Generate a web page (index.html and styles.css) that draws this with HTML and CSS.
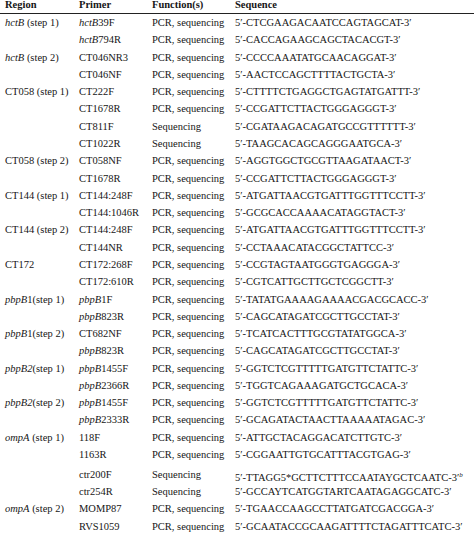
FILE: index.html
```html
<!DOCTYPE html>
<html>
<head>
<meta charset="utf-8">
<link rel="stylesheet" href="styles.css">
</head>
<body>
<table class="primers">
  <colgroup>
    <col class="c-region">
    <col class="c-primer">
    <col class="c-func">
    <col class="c-seq">
  </colgroup>
  <thead>
    <tr><th>Region</th><th>Primer</th><th>Function(s)</th><th>Sequence</th></tr>
  </thead>
  <tbody>
    <tr><td><i>hctB</i> (step 1)</td><td><i>hctB</i>39F</td><td>PCR, sequencing</td><td>5′-CTCGAAGACAATCCAGTAGCAT-3′</td></tr>
    <tr><td></td><td><i>hctB</i>794R</td><td>PCR, sequencing</td><td>5′-CACCAGAAGCAGCTACACGT-3′</td></tr>
    <tr><td><i>hctB</i> (step 2)</td><td>CT046NR3</td><td>PCR, sequencing</td><td>5′-CCCCAAATATGCAACAGGAT-3′</td></tr>
    <tr><td></td><td>CT046NF</td><td>PCR, sequencing</td><td>5′-AACTCCAGCTTTTACTGCTA-3′</td></tr>
    <tr><td>CT058 (step 1)</td><td>CT222F</td><td>PCR, sequencing</td><td>5′-CTTTTCTGAGGCTGAGTATGATTT-3′</td></tr>
    <tr><td></td><td>CT1678R</td><td>PCR, sequencing</td><td>5′-CCGATTCTTACTGGGAGGGT-3′</td></tr>
    <tr><td></td><td>CT811F</td><td>Sequencing</td><td>5′-CGATAAGACAGATGCCGTTTTTT-3′</td></tr>
    <tr><td></td><td>CT1022R</td><td>Sequencing</td><td>5′-TAAGCACAGCAGGGAATGCA-3′</td></tr>
    <tr><td>CT058 (step 2)</td><td>CT058NF</td><td>PCR, sequencing</td><td>5′-AGGTGGCTGCGTTAAGATAACT-3′</td></tr>
    <tr><td></td><td>CT1678R</td><td>PCR, sequencing</td><td>5′-CCGATTCTTACTGGGAGGGT-3′</td></tr>
    <tr><td>CT144 (step 1)</td><td>CT144:248F</td><td>PCR, sequencing</td><td>5′-ATGATTAACGTGATTTGGTTTCCTT-3′</td></tr>
    <tr><td></td><td>CT144:1046R</td><td>PCR, sequencing</td><td>5′-GCGCACCAAAACATAGGTACT-3′</td></tr>
    <tr><td>CT144 (step 2)</td><td>CT144:248F</td><td>PCR, sequencing</td><td>5′-ATGATTAACGTGATTTGGTTTCCTT-3′</td></tr>
    <tr><td></td><td>CT144NR</td><td>PCR, sequencing</td><td>5′-CCTAAACATACGGCTATTCC-3′</td></tr>
    <tr><td>CT172</td><td>CT172:268F</td><td>PCR, sequencing</td><td>5′-CCGTAGTAATGGGTGAGGGA-3′</td></tr>
    <tr><td></td><td>CT172:610R</td><td>PCR, sequencing</td><td>5′-CGTCATTGCTTGCTCGGCTT-3′</td></tr>
    <tr><td><i>pbpB</i>1(step 1)</td><td><i>pbpB</i>1F</td><td>PCR, sequencing</td><td>5′-TATATGAAAAGAAAACGACGCACC-3′</td></tr>
    <tr><td></td><td><i>pbpB</i>823R</td><td>PCR, sequencing</td><td>5′-CAGCATAGATCGCTTGCCTAT-3′</td></tr>
    <tr><td><i>pbpB</i>1(step 2)</td><td>CT682NF</td><td>PCR, sequencing</td><td>5′-TCATCACTTTGCGTATATGGCA-3′</td></tr>
    <tr><td></td><td><i>pbpB</i>823R</td><td>PCR, sequencing</td><td>5′-CAGCATAGATCGCTTGCCTAT-3′</td></tr>
    <tr><td><i>pbpB2</i>(step 1)</td><td><i>pbpB</i>1455F</td><td>PCR, sequencing</td><td>5′-GGTCTCGTTTTTGATGTTCTATTC-3′</td></tr>
    <tr><td></td><td><i>pbpB</i>2366R</td><td>PCR, sequencing</td><td>5′-TGGTCAGAAAGATGCTGCACA-3′</td></tr>
    <tr><td><i>pbpB2</i>(step 2)</td><td><i>pbpB</i>1455F</td><td>PCR, sequencing</td><td>5′-GGTCTCGTTTTTGATGTTCTATTC-3′</td></tr>
    <tr><td></td><td><i>pbpB</i>2333R</td><td>PCR, sequencing</td><td>5′-GCAGATACTAACTTAAAAATAGAC-3′</td></tr>
    <tr><td><i>ompA</i> (step 1)</td><td>118F</td><td>PCR, sequencing</td><td>5′-ATTGCTACAGGACATCTTGTC-3′</td></tr>
    <tr><td></td><td>1163R</td><td>PCR, sequencing</td><td>5′-CGGAATTGTGCATTTACGTGAG-3′</td></tr>
    <tr class="row-tall"><td></td><td>ctr200F</td><td>Sequencing</td><td><div class="seq-low">5′-TTAGG5*GCTTCTTTCCAATAYGCTCAATC-3′<sup><i>b</i></sup></div></td></tr>
    <tr><td></td><td>ctr254R</td><td>Sequencing</td><td>5′-GCCAYTCATGGTARTCAATAGAGGCATC-3′</td></tr>
    <tr><td><i>ompA</i> (step 2)</td><td>MOMP87</td><td>PCR, sequencing</td><td>5′-TGAACCAAGCCTTATGATCGACGGA-3′</td></tr>
    <tr class="row-last"><td></td><td>RVS1059</td><td>PCR, sequencing</td><td>5′-GCAATACCGCAAGATTTTCTAGATTTCATC-3′</td></tr>
  </tbody>
</table>
</body>
</html>
```

FILE: styles.css
```css
html, body {
  margin: 0;
  padding: 0;
  background: #ffffff;
}

.primers {
  width: 474px;
  border-collapse: collapse;
  table-layout: fixed;
  font-family: "Liberation Serif", "Times New Roman", serif;
  font-size: 10.5px;
  color: #161616;
}

.c-region { width: 79px; }
.c-primer { width: 73px; }
.c-func { width: 83px; }
.c-seq { width: 239px; }

.primers th {
  text-align: left;
  font-weight: bold;
  line-height: 10px;
  padding: 0 0 3px 0;
  border-bottom: 1.4px solid #222;
  vertical-align: top;
}

.primers td {
  padding: 0;
  line-height: 17.28px;
  height: 17.28px;
  vertical-align: top;
  white-space: nowrap;
}

.primers th:first-child,
.primers td:first-child {
  padding-left: 5px;
}

.primers i {
  font-style: italic;
}

.row-tall td {
  padding-top: 2.5px;
}

.seq-low {
  margin-top: 3px;
  margin-bottom: -3px;
}

.seq-low sup {
  font-size: 7px;
  line-height: 0;
  vertical-align: 4px;
}

.row-last td {
  border-bottom: 6px solid #8c8c8c;
}
```
